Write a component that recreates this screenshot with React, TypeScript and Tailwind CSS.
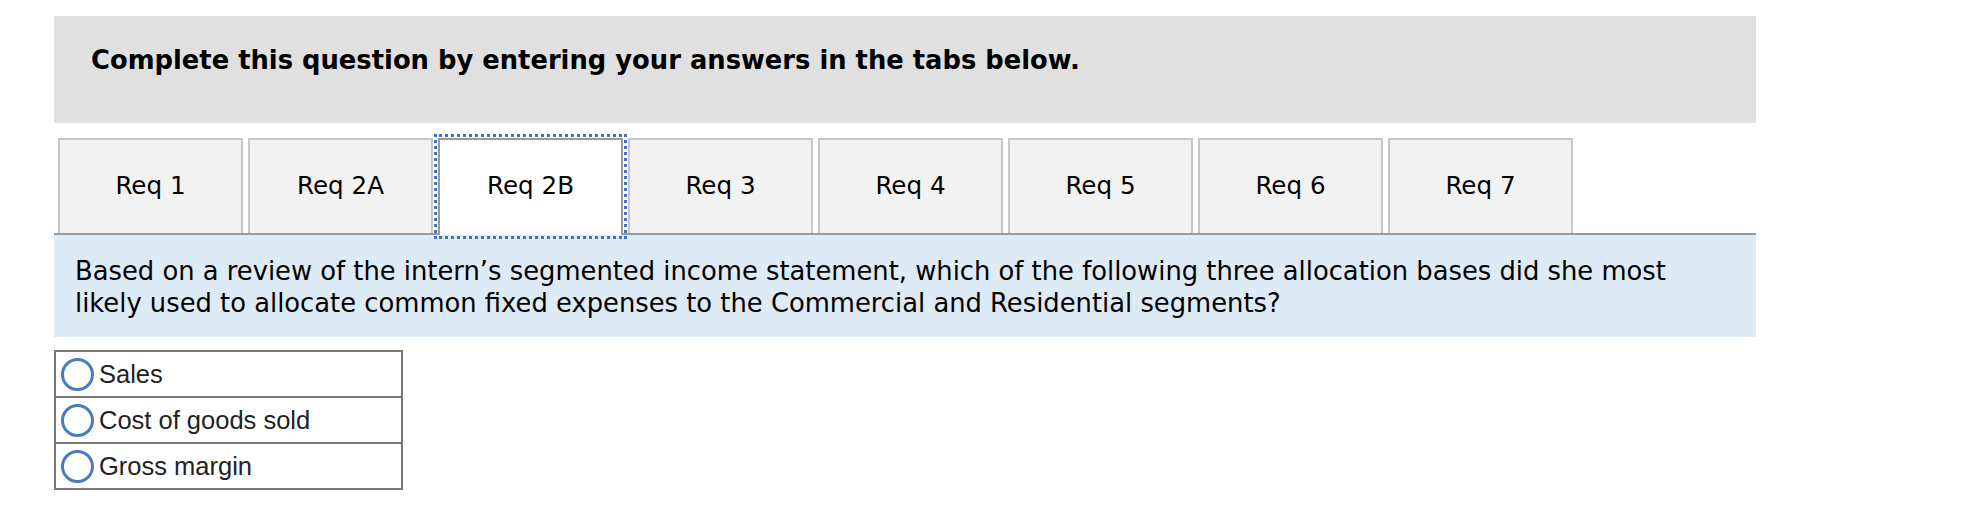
import React, { useState } from 'react';

const tabs = ['Req 1', 'Req 2A', 'Req 2B', 'Req 3', 'Req 4', 'Req 5', 'Req 6', 'Req 7'];
const options = ['Sales', 'Cost of goods sold', 'Gross margin'];

export default function App() {
  const [active, setActive] = useState(2);
  const [picked, setPicked] = useState<number | null>(null);

  return (
    <div className="min-h-screen bg-white pl-[54px] pt-[16px] font-['DejaVu_Sans',Verdana,sans-serif]">
      <div className="w-[1702px]">
        {/* Header */}
        <div className="h-[107px] bg-[#e0e0e0] pl-[37px] pt-[29px]">
          <h1 className="text-[25.8px] leading-[31px] font-bold text-black">
            Complete this question by entering your answers in the tabs below.
          </h1>
        </div>

        {/* Tabs */}
        <div className="mt-[15px] flex items-start gap-[5px] border-b-2 border-[#999999] pl-[4px]">
          {tabs.map((t, i) => (
            <button
              key={t}
              onClick={() => setActive(i)}
              className={`w-[185px] border-2 border-b-0 text-[24.6px] leading-[29px] text-black flex items-center justify-center ${
                i === active
                  ? 'relative -mb-[2px] h-[97px] pb-[4px] bg-white border-[#9a9a9a] outline-[3px] outline-dotted outline-offset-[1px] outline-[#3f70c4]'
                  : 'h-[95px] pb-[2px] bg-[#f2f2f2] border-[#c6c6c6]'
              }`}
            >
              {t}
            </button>
          ))}
        </div>

        {/* Question */}
        <div className="h-[102px] bg-[#ddebf7] pl-[21px] pr-[30px] pt-[20px]">
          <p className="text-[25.8px] leading-[32px] text-black">
            Based on a review of the intern’s segmented income statement, which of the following three allocation bases did she most likely used to allocate common fixed expenses to the Commercial and Residential segments?
          </p>
        </div>
      </div>

      {/* Options */}
      <div className="mt-[13px] w-[349px] border-2 border-[#777777] font-['Liberation_Sans',Arial,sans-serif]">
        {options.map((o, i) => (
          <label
            key={o}
            onClick={() => setPicked(i)}
            className={`flex h-[44px] cursor-pointer items-center ${i > 0 ? 'h-[46px] border-t-2 border-[#777777]' : ''}`}
          >
            <span className="ml-[5px] flex h-[33px] w-[33px] items-center justify-center rounded-full border-[3px] border-[#4a7bbf]">
              {picked === i && <span className="h-[15px] w-[15px] rounded-full bg-[#4a7bbf]" />}
            </span>
            <span className="ml-[5px] text-[25.5px] leading-[30px] text-[#222222]">{o}</span>
          </label>
        ))}
      </div>
    </div>
  );
}
